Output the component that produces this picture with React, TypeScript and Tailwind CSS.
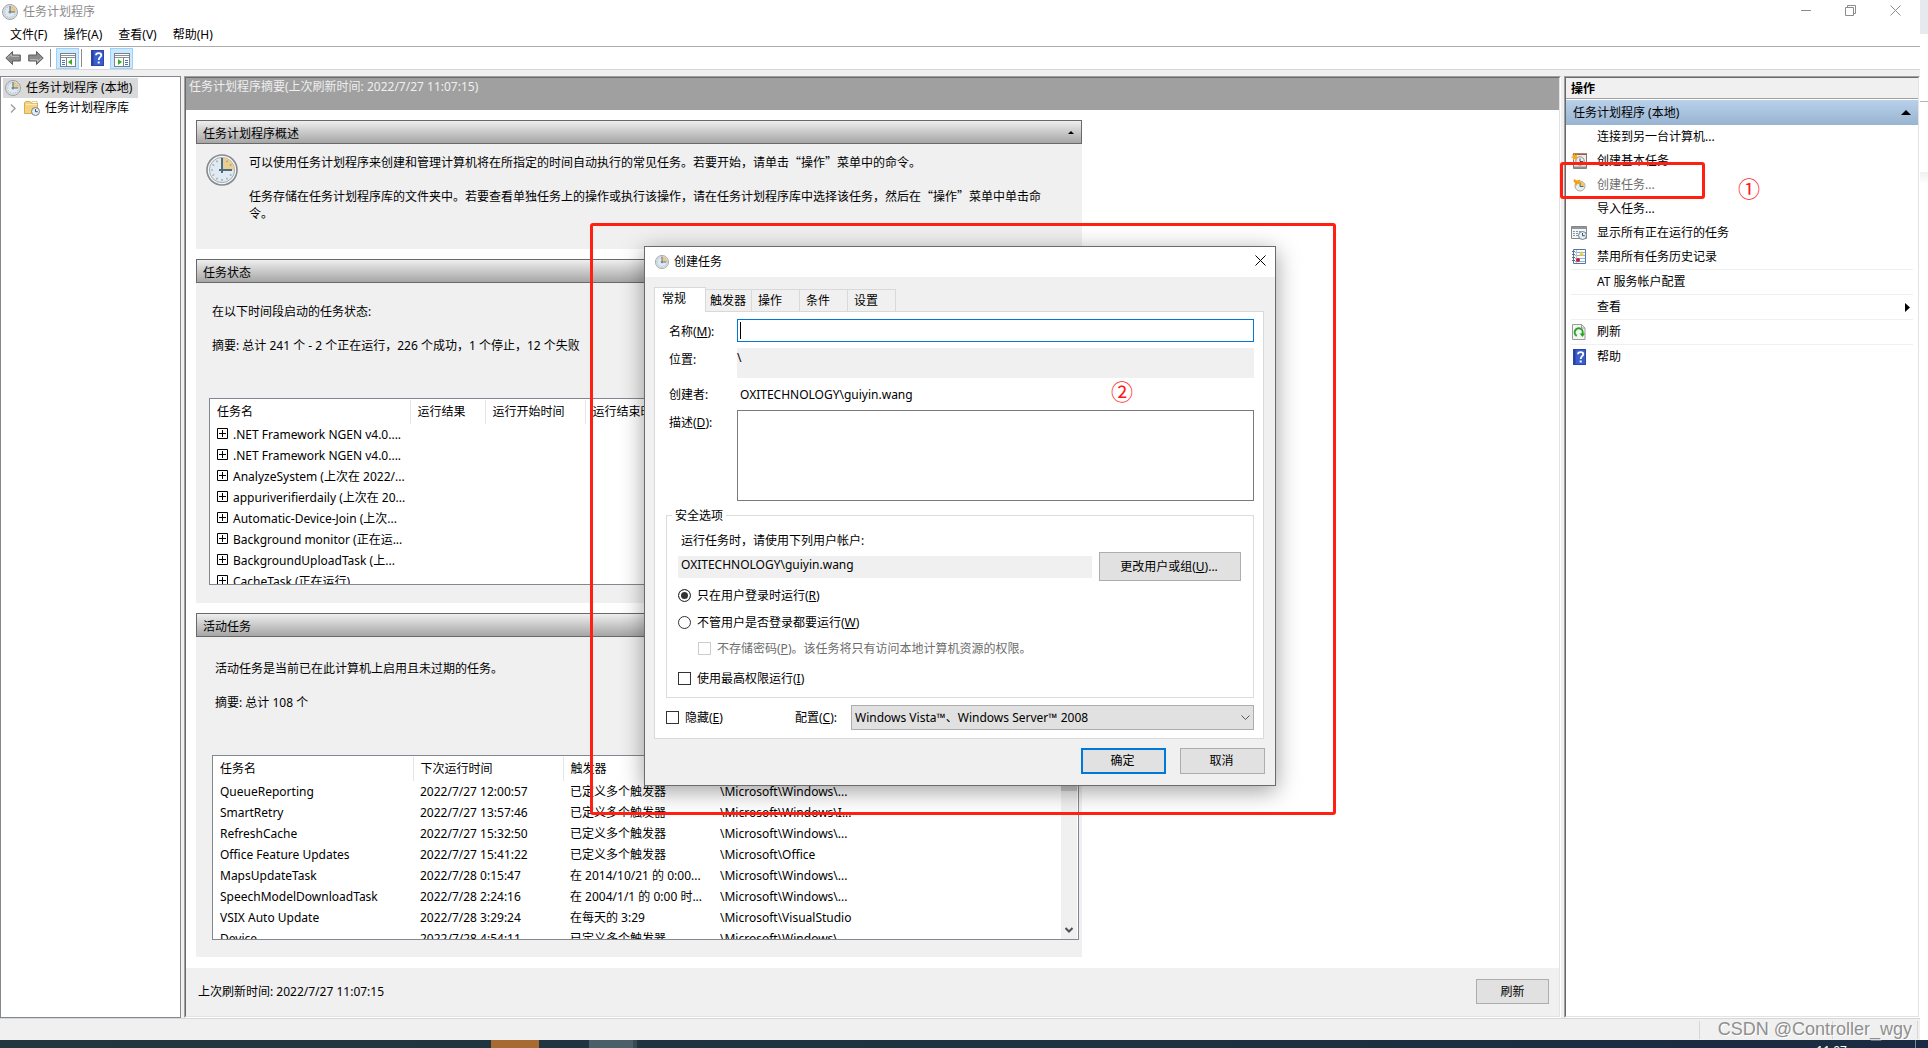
import { useState } from 'react';
import type { ReactNode } from 'react';
import clsx from 'clsx';

const runningTasks = [
  '.NET Framework NGEN v4.0....',
  '.NET Framework NGEN v4.0....',
  'AnalyzeSystem (上次在 2022/...',
  'appuriverifierdaily (上次在 20...',
  'Automatic-Device-Join (上次...',
  'Background monitor (正在运...',
  'BackgroundUploadTask (上...',
  'CacheTask (正在运行)',
];

const activeTasks = [
  ['QueueReporting', '2022/7/27 12:00:57', '已定义多个触发器', '\\Microsoft\\Windows\\...'],
  ['SmartRetry', '2022/7/27 13:57:46', '已定义多个触发器', '\\Microsoft\\Windows\\I...'],
  ['RefreshCache', '2022/7/27 15:32:50', '已定义多个触发器', '\\Microsoft\\Windows\\...'],
  ['Office Feature Updates', '2022/7/27 15:41:22', '已定义多个触发器', '\\Microsoft\\Office'],
  ['MapsUpdateTask', '2022/7/28 0:15:47', '在 2014/10/21 的 0:00...', '\\Microsoft\\Windows\\...'],
  ['SpeechModelDownloadTask', '2022/7/28 2:24:16', '在 2004/1/1 的 0:00 时...', '\\Microsoft\\Windows\\...'],
  ['VSIX Auto Update', '2022/7/28 3:29:24', '在每天的 3:29', '\\Microsoft\\VisualStudio'],
  ['Device', '2022/7/28 4:54:11', '已定义多个触发器', '\\Microsoft\\Windows\\'],
];

function ClockIcon({ className }: { className?: string }) {
  return (
    <svg viewBox="0 0 32 32" className={clsx('shrink-0', className)} aria-hidden="true">
      <circle cx="16" cy="16" r="15" fill="#f4f6f7" stroke="#858a8e" strokeWidth="1.6" />
      <circle cx="16" cy="16" r="12.6" fill="#e0eaf0" stroke="#a3abb1" strokeWidth="1" />
      <path d="M16 16V3.6A12.4 12.4 0 0 1 28.4 16Z" fill="#eccd8b" />
      <path d="M16 5v2M16 25v2M5 16h2M10.500 6.500l1 1.700M6.500 10.500l1.700 1M6.500 21.500l1.700-1M10.500 25.500l1-1.700M21.500 25.500l-1-1.700M25.500 21.500l-1.700-1M21.500 6.500l-1 1.700M25.500 10.500l-1.700 1" stroke="#8ea0ad" strokeWidth="1.200" />
      <path d="M16 4v15M13 16h13" stroke="#4b6a83" strokeWidth="2" fill="none" />
    </svg>
  );
}

function ArrowIcon({ flip }: { flip?: boolean }) {
  return (
    <svg viewBox="0 0 16 16" className={clsx('h-4 w-4', flip && 'rotate-180')} aria-hidden="true">
      <path d="M.8 8 7.500 1.500V5H15.300V11H7.500V14.500Z" fill="#8b8b8b" stroke="#5f5f5f" strokeWidth="1" />
      <path d="M2.500 8 6.500 4.300V6.300H14" fill="none" stroke="#bdbdbd" strokeWidth="1" />
    </svg>
  );
}

function PaneIcon({ right }: { right?: boolean }) {
  return (
    <svg viewBox="0 0 16 14" className="h-[14px] w-4" aria-hidden="true">
      <rect x=".5" y=".5" width="15" height="13" fill="#fff" stroke="#7d8186" />
      <path d="M1 2.500h14M1 4.500h14" stroke="#8a9097" />
      <path d="M11 1.500h1M13 1.500h1" stroke="#fff" />
      <path d={right ? 'M9.500 5v9' : 'M6.500 5v9'} stroke="#7d8186" />
      <path d={right ? 'M11 7.500h3M11 9.500h3M11 11.500h3' : 'M2 7.500h3M2 9.500h3M2 11.500h3'} stroke="#3f78c3" />
      <path d={right ? 'M4 6v6l4-3Z' : 'M12 6v6l-4-3Z'} fill="#35b01f" />
    </svg>
  );
}

function HelpIcon() {
  return (
    <svg viewBox="0 0 13 16" className="h-4 w-[13px]" aria-hidden="true">
      <rect width="13" height="16" fill="#3a5fcd" />
      <path d="M0 0h2.500v16H0Z" fill="#2440a0" />
      <path d="M.5.5h12v15H.5Z" fill="none" stroke="#2b46a8" />
      <path d="M5 5.200C5 2.300 10.300 2.300 10.300 5.200 10.300 7.200 7.700 7.300 7.700 10" fill="none" stroke="#fff" strokeWidth="1.800" />
      <path d="M6.700 11.500h2v2h-2Z" fill="#fff" />
    </svg>
  );
}

function FolderIcon() {
  return (
    <svg viewBox="0 0 16 16" className="h-4 w-4" aria-hidden="true">
      <path d="M.5 2.500 1.500 1.500H6L7 3H13.500V13.500H.5Z" fill="#f4d27e" stroke="#d9ae51" />
      <path d="M8 1.500h5v2H8Z" fill="#fff" stroke="#cfae64" strokeWidth=".6" />
      <path d="M2 4.500h11" stroke="#fdeab4" />
      <circle cx="11.500" cy="11.500" r="4" fill="#e6eef3" stroke="#72808a" />
      <path d="M11.500 9v2.700h2.300" fill="none" stroke="#37556e" />
    </svg>
  );
}

const spark = 'M3.500 0 4.300 2 6.500 1.300 5.700 3.500 7.500 4.500 5.500 5.200 5.500 7.200 3.700 6 1.800 7.200 2 5.200 0 4.200 1.800 3.200 1 1.200 3 2Z';

function BasicTaskIcon() {
  return (
    <svg viewBox="0 0 16 16" className="h-4 w-4" aria-hidden="true">
      <path d="M2.500 1.500h13v14h-13Z" fill="#f1ede6" stroke="#7a7a7a" />
      <path d="M2 1h14" stroke="#a0543d" strokeWidth="1.500" />
      <path d="M3 14.500h12" stroke="#8d8d8d" strokeWidth="2" />
      <circle cx="9" cy="8" r="4.200" fill="#e9f0f4" stroke="#8c8f90" />
      <path d="M9 5.500V8.500H12" fill="none" stroke="#4c4c4c" />
      <path d={spark} fill="#f7a823" />
    </svg>
  );
}

function NewTaskIcon() {
  return (
    <svg viewBox="0 0 16 16" className="h-4 w-4" aria-hidden="true">
      <circle cx="9" cy="9" r="5" fill="#e8eef0" stroke="#a9a9a0" />
      <path d="M9 9V4.500A4.500 4.500 0 0 1 13.500 9Z" fill="#f2c56b" />
      <path d="M9 5.500V9.500H12.500" fill="none" stroke="#59656e" />
      <path d="M3 2 6 3.500 9 2.500 8.500 5 9.500 6.500 6.500 7 4.500 9.500 4 6 2.500 4.500Z" fill="#f59f16" />
    </svg>
  );
}

function RunningTasksIcon() {
  return (
    <svg viewBox="0 0 16 14" className="h-[14px] w-4" aria-hidden="true">
      <path d="M.5.5h15v12H.5Z" fill="#f6f7f8" stroke="#84888d" />
      <path d="M1 2h14" stroke="#8f969e" strokeWidth="2" />
      <path d="M2 5.500h9M2 7.500h7M2 9.500h5" stroke="#8b95a0" strokeDasharray="2 1" />
      <circle cx="11.500" cy="9.500" r="4" fill="#e6eef3" stroke="#71808c" />
      <path d="M11.500 7v2.700h2.300" fill="none" stroke="#37556e" />
    </svg>
  );
}

function HistoryIcon() {
  return (
    <svg viewBox="0 0 16 16" className="h-4 w-4" aria-hidden="true">
      <path d="M2.500.5h12v14h-12Z" fill="#fbfcfe" stroke="#5674a9" />
      <path d="M4 3.500h10M4 6.500h10M4 9.500h10M4 12.500h10" stroke="#8fb3e0" />
      <path d="M5.500 1v13" stroke="#b9c5da" />
      <path d="M1 2.500h3M1 5.500h3M1 8.500h3M1 11.500h3" stroke="#6d6d6d" />
      <path d="M10.500 2 13 6.500H8Z" fill="#f3cf35" />
      <circle cx="7" cy="11" r="2" fill="#c8202c" />
    </svg>
  );
}

function RefreshIcon() {
  return (
    <svg viewBox="0 0 16 16" className="h-4 w-4" aria-hidden="true">
      <path d="M1.500.5h9l3.500 3.500v11.500H1.500Z" fill="#f4f6f4" stroke="#9b9b9b" />
      <path d="M10.500.5V4H14" fill="none" stroke="#9b9b9b" />
      <path d="M5.800 11.800A4 4 0 1 1 11.300 10" fill="none" stroke="#2ba32b" strokeWidth="2" />
      <path d="M8.500 9.500H14L11.500 13Z" fill="#2ba32b" />
    </svg>
  );
}

function CloseIcon() {
  return (
    <svg viewBox="0 0 11 11" className="h-[11px] w-[11px]" aria-hidden="true">
      <path d="M.5.5l10 10M10.500.5l-10 10" stroke="currentColor" />
    </svg>
  );
}

function UpTriangle({ className }: { className?: string }) {
  return (
    <svg viewBox="0 0 10 5" className={className} aria-hidden="true">
      <path d="M5 0 10 5H0Z" />
    </svg>
  );
}

function Sunken({ className, children }: { className?: string; children: ReactNode }) {
  return (
    <div className={clsx('flex border border-t-[#a0a0a0] border-r-white border-b-white border-l-[#a0a0a0]', className)}>
      <div className="flex min-w-0 flex-1 flex-col border border-t-[#696969] border-r-[#e3e3e3] border-b-[#e3e3e3] border-l-[#696969] bg-white">
        {children}
      </div>
    </div>
  );
}

function Card({ title, children }: { title: string; children: ReactNode }) {
  return (
    <section className="w-full max-w-[886px] bg-[#f0f0f0]">
      <header className="flex h-6 items-center justify-between border border-[#696969] bg-linear-to-b from-[#efefef] to-[#a6a6a6] pr-[7px] pl-[6px]">
        <h2 className="pt-[3px]">{title}</h2>
        <button type="button" aria-label="折叠">
          <UpTriangle className="h-[3px] w-[6px]" />
        </button>
      </header>
      {children}
    </section>
  );
}

function HeadCell({ children }: { children?: ReactNode }) {
  return <th className="h-6 border-r border-[#e5e5e5] pb-[2px] pl-[7px] text-left font-normal whitespace-nowrap">{children}</th>;
}

function TreePane() {
  return (
    <nav className="w-[181px] shrink-0 border border-[#828790] bg-white px-[2px] py-px">
      <div className="flex h-5 w-[135px] items-center gap-[5px] bg-[#d9d9d9] pl-[2px]">
        <ClockIcon className="h-4 w-4" />
        <span className="pb-px whitespace-nowrap">任务计划程序 (本地)</span>
      </div>
      <div className="flex h-5 items-center pl-[7px]">
        <svg viewBox="0 0 6 9" className="mr-[8px] h-[9px] w-[6px]" aria-hidden="true">
          <path d="M1 .5 5 4.500 1 8.500" fill="none" stroke="#a0a0a0" strokeWidth="1.500" />
        </svg>
        <FolderIcon />
        <span className="ml-[5px] pb-px">任务计划程序库</span>
      </div>
    </nav>
  );
}

function Summary() {
  return (
    <Sunken className="min-w-0 flex-1">
      <h1 className="h-8 shrink-0 bg-[#a0a0a0] pl-[3px] text-[#efefef]">任务计划程序摘要(上次刷新时间: 2022/7/27 11:07:15)</h1>
      <div className="flex flex-1 flex-col gap-[10px] p-[10px]">
        <Card title="任务计划程序概述">
          <div className="flex gap-[11px] px-[10px] pt-[9px] pb-[28px]">
            <ClockIcon className="mt-px h-8 w-8" />
            <div className="flex max-w-[800px] flex-col gap-[17px] font-['Noto_Sans_CJK_SC',sans-serif]">
              <p>可以使用任务计划程序来创建和管理计算机将在所指定的时间自动执行的常见任务。若要开始，请单击“操作”菜单中的命令。</p>
              <p>任务存储在任务计划程序库的文件夹中。若要查看单独任务上的操作或执行该操作，请在任务计划程序库中选择该任务，然后在“操作”菜单中单击命令。</p>
            </div>
          </div>
        </Card>

        <Card title="任务状态">
          <div className="px-[13px] pt-[20px] pb-[18px]">
            <p className="ml-[3px]">在以下时间段启动的任务状态:</p>
            <p className="mt-[17px] ml-[3px]">摘要: 总计 241 个 - 2 个正在运行，226 个成功，1 个停止，12 个失败</p>
            <div className="mt-[44px] mr-[-10px] h-[187px] overflow-hidden border border-[#828790] bg-white pt-px">
              <table className="w-full table-fixed border-collapse">
                <colgroup>
                  <col className="w-[200px]" />
                  <col className="w-[75px]" />
                  <col className="w-[100px]" />
                  <col className="w-[100px]" />
                  <col />
                </colgroup>
                <thead>
                  <tr>
                    <HeadCell>任务名</HeadCell>
                    <HeadCell>运行结果</HeadCell>
                    <HeadCell>运行开始时间</HeadCell>
                    <HeadCell>运行结束时间</HeadCell>
                    <HeadCell />
                  </tr>
                </thead>
                <tbody>
                  {runningTasks.map((name, i) => (
                    <tr key={i}>
                      <td colSpan={5} className="h-[21px] pl-[7px]">
                        <div className="flex items-center gap-[5px] whitespace-nowrap">
                          <svg viewBox="0 0 11 11" className="mb-[2px] h-[11px] w-[11px]" aria-hidden="true">
                            <path d="M.5.5h10v10H.5ZM2 5.500h7M5.500 2v7" fill="none" stroke="#000" />
                          </svg>
                          {name}
                        </div>
                      </td>
                    </tr>
                  ))}
                </tbody>
              </table>
            </div>
          </div>
        </Card>

        <Card title="活动任务">
          <div className="px-4 pt-[23px] pb-[17px]">
            <p className="ml-[3px]">活动任务是当前已在此计算机上启用且未过期的任务。</p>
            <p className="mt-[17px] ml-[3px]">摘要: 总计 108 个</p>
            <div className="mt-[44px] mr-[-13px] flex h-[185px] overflow-hidden border border-[#828790] bg-white pr-px">
              <table className="mt-px w-full min-w-0 flex-1 table-fixed border-collapse self-start">
                <colgroup>
                  <col className="w-[200px]" />
                  <col className="w-[150px]" />
                  <col className="w-[150px]" />
                  <col />
                </colgroup>
                <thead>
                  <tr>
                    <HeadCell>任务名</HeadCell>
                    <HeadCell>下次运行时间</HeadCell>
                    <HeadCell>触发器</HeadCell>
                    <HeadCell>位置</HeadCell>
                  </tr>
                </thead>
                <tbody>
                  {activeTasks.map((row) => (
                    <tr key={row[0]}>
                      {row.map((cell, i) => (
                        <td key={i} className="h-[21px] overflow-hidden pl-[7px] whitespace-nowrap">{cell}</td>
                      ))}
                    </tr>
                  ))}
                </tbody>
              </table>
              <div className="flex w-4 flex-col items-center justify-between bg-[#f0f0f0] pb-[6px]">
                <div className="mt-4 h-[19px] w-4 bg-[#cdcdcd]" />
                <svg viewBox="0 0 8 6" className="h-[6px] w-2" aria-hidden="true">
                  <path d="M.5 1 4 4.500 7.500 1" fill="none" stroke="#505050" strokeWidth="2" />
                </svg>
              </div>
            </div>
          </div>
        </Card>
      </div>
      <footer className="flex h-12 shrink-0 items-center justify-between bg-[#f0f0f0] pr-[10px] pb-px pl-[12px]">
        <span>上次刷新时间: 2022/7/27 11:07:15</span>
        <button type="button" className="h-[25px] w-[73px] border border-[#adadad] bg-[#e1e1e1]">刷新</button>
      </footer>
    </Sunken>
  );
}

function Action({ icon, label, disabled, line, more }: { icon?: ReactNode; label: string; disabled?: boolean; line?: boolean; more?: boolean }) {
  return (
    <li className={clsx('mr-[5px] ml-[5px]', line && 'border-t border-[#f0f0f0]')}>
      <button type="button" disabled={disabled} className="flex h-6 w-full items-center text-left disabled:text-[#6d6d6d]">
        <span className="flex w-4 justify-center">{icon}</span>
        <span className="ml-[10px] flex-1 pb-[2px]">{label}</span>
        {more && (
          <svg viewBox="0 0 5 9" className="mr-[3px] h-[9px] w-[5px]" aria-hidden="true">
            <path d="M0 0 5 4.500 0 9Z" />
          </svg>
        )}
      </button>
    </li>
  );
}

function ActionsPane() {
  return (
    <Sunken className="w-[356px] shrink-0">
      <h2 className="flex h-[21px] items-center border-b border-[#a0a0a0] bg-[#f0f0f0] pl-[5px] font-bold">操作</h2>
      <div className="mt-px flex h-[25px] items-center justify-between bg-linear-to-b from-[#b9d1ea] to-[#99b4d1] pr-[7px] pl-[7px]">
        <span>任务计划程序 (本地)</span>
        <UpTriangle className="h-[5px] w-[10px]" />
      </div>
      <ul>
        <Action label="连接到另一台计算机..." />
        <Action icon={<BasicTaskIcon />} label="创建基本任务..." />
        <Action icon={<NewTaskIcon />} label="创建任务..." disabled />
        <Action label="导入任务..." />
        <Action icon={<RunningTasksIcon />} label="显示所有正在运行的任务" />
        <Action icon={<HistoryIcon />} label="禁用所有任务历史记录" />
        <Action label="AT 服务帐户配置" line />
        <Action label="查看" line more />
        <Action icon={<RefreshIcon />} label="刷新" line />
        <Action icon={<HelpIcon />} label="帮助" line />
      </ul>
    </Sunken>
  );
}

const tabs = ['触发器', '操作', '条件', '设置'];
const box = 'h-[13px] w-[13px] shrink-0 appearance-none border border-[#333] bg-white disabled:border-[#ccc]';
const radio = 'h-[13px] w-[13px] shrink-0 appearance-none rounded-full border border-[#333] bg-white checked:bg-[#333] checked:shadow-[inset_0_0_0_2px_white]';

function CreateTaskDialog() {
  const [name, setName] = useState('');
  const [mode, setMode] = useState('loggedOn');

  return (
    <div role="dialog" aria-label="创建任务" className="absolute top-[246px] left-[644px] flex w-[632px] flex-col border border-[#6b6b6b] bg-[#f0f0f0] shadow-[0_5px_22px_rgba(0,0,0,0.38)]">
      <div className="flex h-[30px] items-center bg-white pr-[9px] pl-[10px]">
        <ClockIcon className="h-[14px] w-[14px]" />
        <span className="ml-[5px] flex-1 pb-[2px]">创建任务</span>
        <button type="button" aria-label="关闭" className="mb-[3px]">
          <CloseIcon />
        </button>
      </div>

      <div className="flex flex-col pt-[10px] pr-[11px] pb-[11px] pl-[9px]">
        <div role="tablist" className="flex items-end">
          <button role="tab" aria-selected="true" type="button" className="z-10 -mb-px h-[25px] w-[52px] border border-b-0 border-[#d9d9d9] bg-white pb-[3px] pl-[7px] text-left">常规</button>
          {tabs.map((tab) => (
            <button key={tab} role="tab" type="button" className="h-[22px] w-[46px] border border-b-0 border-l-0 border-[#d9d9d9] pl-[4px] text-left [&:nth-child(n+3)]:w-12 [&:nth-child(n+3)]:pl-[6px]">
              {tab}
            </button>
          ))}
        </div>

        <div className="flex flex-col border border-[#d9d9d9] bg-white pt-[7px] pr-[9px] pb-[8px] pl-[11px]">
          <div className="flex h-[23px] pl-[3px]">
            <label htmlFor="name" className="w-[68px] pt-1">名称(<u>M</u>):</label>
            <div className="relative flex flex-1">
              <input id="name" type="text" value={name} onChange={(e) => setName(e.target.value)} className="w-full border border-[#0078d7] bg-white px-1 outline-none" />
              <span className="absolute top-[3px] left-[3px] h-[17px] w-px bg-black" />
            </div>
          </div>
          <div className="mt-[6px] flex h-[30px] pl-[3px]">
            <span className="w-[68px] pt-[3px]">位置:</span>
            <span className="flex-1 bg-[#f0f0f0] pt-px">\</span>
          </div>
          <div className="mt-[8px] flex pl-[3px]">
            <span className="w-[71px]">创建者:</span>
            <span>OXITECHNOLOGY\guiyin.wang</span>
          </div>
          <div className="mt-[7px] flex h-[91px] pl-[3px]">
            <label htmlFor="description" className="w-[68px] pt-1">描述(<u>D</u>):</label>
            <textarea id="description" className="flex-1 resize-none border border-[#7a7a7a] bg-white" />
          </div>

          <fieldset className="mt-[6px] border border-[#dcdcdc] pr-[12px] pb-[10px] pl-[11px]">
            <legend className="ml-[-6px] px-[3px]">安全选项</legend>
            <p className="mt-[8px] ml-[3px]">运行任务时，请使用下列用户帐户:</p>
            <div className="mt-[3px] flex items-center gap-[7px]">
              <span className="h-[22px] flex-1 bg-[#f0f0f0] pl-[3px]">OXITECHNOLOGY\guiyin.wang</span>
              <button type="button" className="h-[29px] w-[142px] border border-[#adadad] bg-[#e1e1e1] pr-[2px]">更改用户或组(<u>U</u>)...</button>
            </div>
            <label className="mt-[6px] flex items-center gap-[6px]">
              <input type="radio" name="mode" checked={mode === 'loggedOn'} onChange={() => setMode('loggedOn')} className={radio} />
              <span>只在用户登录时运行(<u>R</u>)</span>
            </label>
            <label className="mt-[10px] flex items-center gap-[6px]">
              <input type="radio" name="mode" checked={mode === 'always'} onChange={() => setMode('always')} className={radio} />
              <span>不管用户是否登录都要运行(<u>W</u>)</span>
            </label>
            <label className="mt-[9px] ml-5 flex items-center gap-[6px] text-[#6d6d6d]">
              <input type="checkbox" disabled className={box} />
              <span>不存储密码(<u>P</u>)。该任务将只有访问本地计算机资源的权限。</span>
            </label>
            <label className="mt-[13px] flex items-center gap-[6px]">
              <input type="checkbox" className={box} />
              <span>使用最高权限运行(<u>I</u>)</span>
            </label>
          </fieldset>

          <div className="mt-[7px] flex h-[25px] items-center">
            <label className="flex w-[129px] items-center gap-[6px]">
              <input type="checkbox" className={box} />
              <span>隐藏(<u>E</u>)</span>
            </label>
            <label htmlFor="configure" className="w-[56px]">配置(<u>C</u>):</label>
            <div className="relative flex h-full flex-1">
              <select id="configure" className="w-full appearance-none border border-[#adadad] bg-[#e1e1e1] pl-[3px]">
                <option>Windows Vista™、Windows Server™ 2008</option>
              </select>
              <svg viewBox="0 0 9 6" className="pointer-events-none absolute top-[10px] right-[4px] h-[6px] w-[9px]" aria-hidden="true">
                <path d="M.5.5 4.500 4.500 8.500.5" fill="none" stroke="#555" />
              </svg>
            </div>
          </div>
        </div>

        <div className="mt-[9px] -mr-px flex justify-end gap-[14px]">
          <button type="button" className="h-[26px] w-[85px] border-2 border-[#0078d7] bg-[#e1e1e1] pr-[2px] pb-px">确定</button>
          <button type="button" className="h-[26px] w-[85px] border border-[#adadad] bg-[#e1e1e1] pr-[2px] pb-px">取消</button>
        </div>
      </div>
    </div>
  );
}

export default function App() {
  return (
    <div className="relative flex h-screen flex-col overflow-hidden bg-white font-['Noto_Sans','Noto_Sans_CJK_SC',sans-serif] text-[12px] leading-[17px] text-black">
      <div className="flex min-h-0 flex-1">
        <div className="flex min-w-0 flex-1 flex-col bg-[#f0f0f0]">
          <div className="flex h-[23px] shrink-0 items-center bg-white pl-[2px]">
            <ClockIcon className="h-4 w-4" />
            <span className="ml-[5px] flex-1 text-[#8c8c8c]">任务计划程序</span>
            <div className="flex items-center gap-[34px] pr-[19px] pb-[3px] text-[#8c8c8c]">
              <button type="button" aria-label="最小化" className="h-px w-[10px] bg-[#8c8c8c]" />
              <button type="button" aria-label="向下还原">
                <svg viewBox="0 0 11 11" className="h-[11px] w-[11px]" aria-hidden="true">
                  <path d="M.5 2.500h8v8h-8ZM2.500 2.500V.5h8v8h-2" fill="none" stroke="currentColor" />
                </svg>
              </button>
              <button type="button" aria-label="关闭">
                <CloseIcon />
              </button>
            </div>
          </div>

          <div className="flex h-6 shrink-0 items-center border-b border-[#acacac] bg-white pl-[2px]">
            {['文件(F)', '操作(A)', '查看(V)', '帮助(H)'].map((item) => (
              <button key={item} type="button" className="px-2">{item}</button>
            ))}
          </div>

          <div className="flex h-[23px] shrink-0 items-center border-b border-[#d7d7d7] bg-white pl-[5px]">
            <button type="button" aria-label="后退"><ArrowIcon /></button>
            <button type="button" aria-label="前进" className="ml-[7px]"><ArrowIcon flip /></button>
            <span className="mx-[5px] ml-[6px] h-[18px] w-px bg-[#8a8a8a]" />
            <button type="button" aria-label="显示控制台树" className="flex h-[21px] w-[23px] items-center justify-center border border-[#99d1ff] bg-[#cce8ff] pt-[3px]"><PaneIcon /></button>
            <span className="ml-[2px] h-[18px] w-px bg-[#8a8a8a]" />
            <button type="button" aria-label="帮助" className="ml-[9px]"><HelpIcon /></button>
            <button type="button" aria-label="显示操作窗格" className="ml-[6px] flex h-[21px] w-[23px] items-center justify-center border border-[#99d1ff] bg-[#cce8ff] pt-[3px]"><PaneIcon right /></button>
          </div>

          <main className="mt-[6px] flex min-h-0 flex-1">
            <TreePane />
            <div className="ml-[3px] flex min-w-0 flex-1 gap-[3px]">
              <Summary />
              <ActionsPane />
            </div>
          </main>

          <footer className="flex h-[22px] shrink-0 items-center justify-end border-t border-[#d7d7d7] pr-[2px]">
            <span className="h-[18px] w-[133px] border-l border-[#d7d7d7]" />
            <span className="h-[18px] w-[86px] border-x border-[#d7d7d7]" />
          </footer>
        </div>

        {/* edge of the window behind */}
        <aside className="flex w-2 shrink-0 flex-col bg-white">
          <div className="h-[34px] bg-[#e6e9ed]" />
          <div className="h-[68px] border-b border-[#b5b5b5]" />
          <div className="h-[70px]" />
          <div className="h-3 bg-linear-to-b from-[#f0f0f0] to-white" />
        </aside>
      </div>

      <div className="flex h-2 shrink-0 overflow-hidden bg-linear-to-r from-[#22373f] via-[#1e3341] to-[#1a2a42]">
        <span className="ml-[491px] w-12 bg-[#a86a33]" />
        <span className="ml-[50px] w-11 bg-[#4b5f69]" />
        <span className="w-1 bg-[#3a4954]" />
        <span className="mt-[2px] mr-[68px] ml-auto text-white">11:07</span>
        <span className="mr-[12px] w-px bg-[#7d8a96]" />
      </div>

      <CreateTaskDialog />

      <div className="pointer-events-none absolute top-[223px] left-[590px] h-[592px] w-[746px] rounded-[3px] border-3 border-[#ff2012]" />
      <div className="pointer-events-none absolute top-[162px] left-[1560px] h-[37px] w-[145px] rounded-[3px] border-3 border-[#ff2012]" />
      <span className="absolute top-[177px] left-[1738px] text-[22px] leading-[22px] text-[#ff1a1a]">①</span>
      <span className="absolute top-[380px] left-[1111px] text-[22px] leading-[22px] text-[#ff1a1a]">②</span>
      <span className="absolute right-[16px] bottom-[9px] font-['Liberation_Sans',sans-serif] text-[18px] leading-[20px] text-[#8f8f8f] [text-shadow:1px_1px_0_white]">CSDN @Controller_wgy</span>
    </div>
  );
}
